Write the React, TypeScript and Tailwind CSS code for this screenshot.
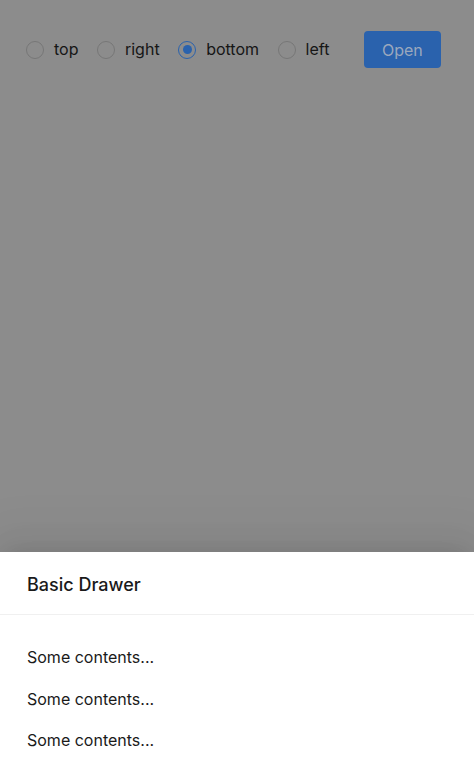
import { useState } from "react";

const placements = ["top", "right", "bottom", "left"];

function Radio({ label, checked, onClick }: { label: string; checked: boolean; onClick: () => void }) {
  return (
    <label className="flex items-center mr-[18.5px] cursor-pointer" onClick={onClick}>
      <span
        className={
          checked
            ? "flex items-center justify-center w-[18px] h-[18px] rounded-full border border-[#2a62ad] bg-[#8c8c8c]"
            : "w-[18px] h-[18px] rounded-full border border-[#777777] bg-[#8c8c8c]"
        }
      >
        {checked && <span className="w-[9px] h-[9px] rounded-full bg-[#2a62ad]" />}
      </span>
      <span className="pl-[10px] text-[16px] leading-[25px] text-[#161616]">{label}</span>
    </label>
  );
}

export default function App() {
  const [placement, setPlacement] = useState("bottom");

  return (
    <div
      className="relative h-[779px] w-full overflow-hidden bg-[#8c8c8c]"
      style={{ fontFamily: "Inter, 'Liberation Sans', sans-serif" }}
    >
      {/* Options row (under the mask) */}
      <div className="flex items-center pt-[31px] pl-[26px]">
        {placements.map((p) => (
          <Radio key={p} label={p} checked={placement === p} onClick={() => setPlacement(p)} />
        ))}
        <button
          type="button"
          className="ml-[16px] w-[77px] h-[37px] rounded-[4px] bg-[#2a62ad] text-[16px] text-[#9aa8bd]"
        >
          Open
        </button>
      </div>

      {/* Drawer */}
      <div className="absolute bottom-0 left-0 right-0 h-[227px] bg-white shadow-[0_-6px_16px_-8px_rgba(0,0,0,0.08),0_-9px_28px_0_rgba(0,0,0,0.05),0_-12px_48px_16px_rgba(0,0,0,0.03)]">
        <div className="flex items-center h-[63px] px-[27px] pt-[2px] border-b border-[#f0f0f0]">
          <div className="text-[18px] font-medium leading-[27px] text-[#1a1a1a]">Basic Drawer</div>
        </div>
        <div className="px-[27px] pt-[30px] text-[16px] leading-[25px] text-[#1a1a1a]">
          <p className="mb-[16.5px]">Some contents...</p>
          <p className="mb-[16.5px]">Some contents...</p>
          <p>Some contents...</p>
        </div>
      </div>
    </div>
  );
}
